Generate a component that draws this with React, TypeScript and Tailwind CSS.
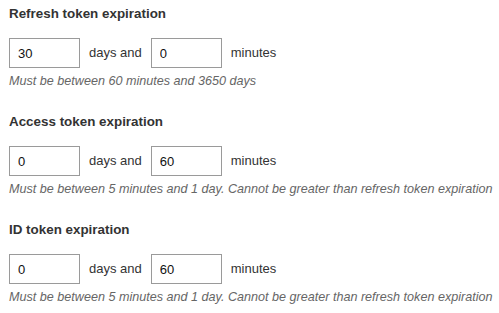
const sections = [
  {
    title: "Refresh token expiration",
    days: "30",
    minutes: "0",
    help: "Must be between 60 minutes and 3650 days",
  },
  {
    title: "Access token expiration",
    days: "0",
    minutes: "60",
    help: "Must be between 5 minutes and 1 day. Cannot be greater than refresh token expiration",
  },
  {
    title: "ID token expiration",
    days: "0",
    minutes: "60",
    help: "Must be between 5 minutes and 1 day. Cannot be greater than refresh token expiration",
  },
];

function DurationField({ value }: { value: string }) {
  return (
    <input
      type="text"
      defaultValue={value}
      className="h-[30px] w-[71px] border border-[#9a9a9a] bg-white px-[8px] text-[13px] text-[#111] outline-none"
    />
  );
}

export default function App() {
  return (
    <div className="min-h-screen bg-white px-[9px] pt-[6px] font-['Liberation_Sans',Arial,sans-serif]">
      {sections.map((section) => (
        <section key={section.title} className="mb-[25px]">
          <h3 className="text-[13.4px] font-bold leading-[16px] text-[#333]">
            {section.title}
          </h3>
          <div className="mt-[16px] flex items-center gap-[9px] text-[13px] text-[#333]">
            <DurationField value={section.days} />
            <span>days and</span>
            <DurationField value={section.minutes} />
            <span>minutes</span>
          </div>
          <p className="mt-[5px] whitespace-nowrap text-[12.6px] italic leading-[16px] text-[#666]">
            {section.help}
          </p>
        </section>
      ))}
    </div>
  );
}
